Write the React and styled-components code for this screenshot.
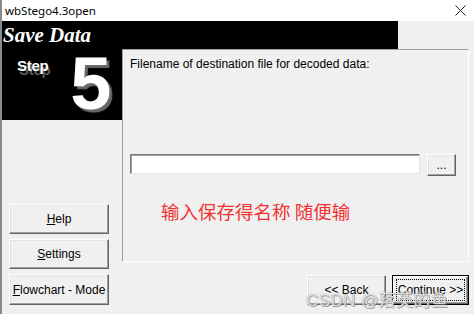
import React from "react";
import styled, { createGlobalStyle } from "styled-components";

const Global = createGlobalStyle`
  html, body { margin: 0; padding: 0; background: #f0f0f0; }
  #root { width: 474px; height: 314px; overflow: hidden; }
`;

const Window = styled.div`
  position: relative;
  width: 474px;
  height: 314px;
  background: #f0f0f0;
  display: flex;
  flex-direction: column;
  box-sizing: border-box;
  border-left: 2px solid #8a8a8a;
  font-family: "Liberation Sans", Arial, sans-serif;
  overflow: hidden;
`;

const TitleBar = styled.div`
  height: 21px;
  flex: none;
  background: #ffffff;
  display: flex;
  align-items: center;
  justify-content: space-between;
  padding: 0 6px 0 3px;
  font-family: "Noto Sans", "Noto Sans CJK SC", sans-serif;
  font-size: 11.5px;
  color: #000;
`;

const CloseIcon = styled.svg`
  width: 11px;
  height: 11px;
  margin-right: 2px;
`;

const Header = styled.div`
  height: 28px;
  width: 396px;
  flex: none;
  background: #000;
  display: flex;
  align-items: center;
  padding-left: 1px;
  box-sizing: border-box;
  color: #fff;
  font-family: "Liberation Serif", "Times New Roman", serif;
  font-style: italic;
  font-weight: bold;
  font-size: 21px;
`;

const Main = styled.div`
  flex: 1;
  display: flex;
`;

const LeftCol = styled.div`
  width: 120px;
  flex: none;
  display: flex;
  flex-direction: column;
  padding-bottom: 9px;
  box-sizing: border-box;
`;

const StepPanel = styled.div`
  height: 71px;
  background: #000;
  display: flex;
  color: #fff;
  font-family: "Liberation Sans", Arial, sans-serif;
  font-weight: bold;
`;

const StepWord = styled.div`
  font-size: 15px;
  line-height: 17px;
  margin: 8px 0 0 15px;
  text-shadow: 2px 4px 0 #5a5a5a;
  letter-spacing: -0.3px;
`;

const StepNum = styled.div`
  font-size: 74px;
  line-height: 64px;
  height: 64px;
  margin: 3px 0 0 22px;
  text-shadow: 3px 3px 1px #6a6a6a;
`;

const SideButtons = styled.div`
  margin-top: auto;
  padding-left: 7px;
  display: flex;
  flex-direction: column;
  gap: 5px;
`;

const Btn = styled.button`
  box-sizing: border-box;
  width: ${(p) => p.$w || 100}px;
  height: ${(p) => p.$h || 30}px;
  padding: 0;
  background: #f0f0f0;
  border-style: solid;
  border-width: 1px;
  border-color: #ffffff #646464 #646464 #ffffff;
  box-shadow: inset -1px -1px 0 #a0a0a0, inset 1px 1px 0 #e3e3e3;
  font-family: "Liberation Sans", Arial, sans-serif;
  font-size: 12px;
  color: #000;
  display: flex;
  align-items: center;
  justify-content: center;
  cursor: default;
  u { text-decoration: underline; text-underline-offset: 1px; }
`;

const DefaultBtn = styled(Btn)`
  border: 1px solid #000;
  box-shadow: inset 1px 1px 0 #fff, inset -1px -1px 0 #646464, inset -2px -2px 0 #a0a0a0;
  padding: 3px;
`;

const Focus = styled.span`
  flex: 1;
  align-self: stretch;
  display: flex;
  align-items: center;
  justify-content: center;
  border: 1px dotted #000;
`;

const RightCol = styled.div`
  flex: 1;
  display: flex;
  flex-direction: column;
  padding-right: 5px;
  padding-bottom: 9px;
  box-sizing: border-box;
`;

const ContentPanel = styled.div`
  height: 213px;
  box-sizing: border-box;
  border-style: solid;
  border-width: 1px;
  border-color: #a0a0a0 #ffffff #ffffff #a0a0a0;
  padding: 7px 0 0 7px;
  display: flex;
  flex-direction: column;
`;

const Label = styled.div`
  font-size: 12px;
  color: #000;
  line-height: 14px;
`;

const FileRow = styled.div`
  margin-top: 83px;
  display: flex;
  align-items: flex-start;
  gap: 7px;
`;

const FileInput = styled.div`
  width: 290px;
  height: 20px;
  box-sizing: border-box;
  background: #fff;
  border-style: solid;
  border-width: 1px;
  border-color: #7a7a7a #e3e3e3 #e3e3e3 #7a7a7a;
  box-shadow: inset 1px 1px 0 #a0a0a0;
`;

const Note = styled.div`
  margin: 24px 0 0 31px;
  font-family: "Noto Sans CJK SC", "Noto Sans", sans-serif;
  font-size: 18.5px;
  line-height: 22px;
  color: #f03232;
`;

const BottomButtons = styled.div`
  margin-top: auto;
  display: flex;
  justify-content: flex-end;
  gap: 6px;
`;

const Watermark = styled.div`
  position: absolute;
  left: 304px;
  top: 286px;
  font-family: "Liberation Sans", "Noto Sans CJK SC", sans-serif;
  font-size: 17px;
  color: rgba(255, 255, 255, 0.7);
  text-shadow: 0 0 1px #888, 1px 1px 0 rgba(120,120,120,0.6);
  pointer-events: none;
  letter-spacing: 0.4px;
`;

export default function App() {
  return (
    <>
      <Global />
      <Window>
        <TitleBar>
          <span>wbStego4.3open</span>
          <CloseIcon viewBox="0 0 11 11">
            <path d="M0.5 0.5L10.5 10.5M10.5 0.5L0.5 10.5" stroke="#222" strokeWidth="1" fill="none" />
          </CloseIcon>
        </TitleBar>
        <Header>Save Data</Header>
        <Main>
          <LeftCol>
            <StepPanel>
              <StepWord>Step</StepWord>
              <StepNum>5</StepNum>
            </StepPanel>
            <SideButtons>
              <Btn><span><u>H</u>elp</span></Btn>
              <Btn><span><u>S</u>ettings</span></Btn>
              <Btn $h={31}><span><u>F</u>lowchart - Mode</span></Btn>
            </SideButtons>
          </LeftCol>
          <RightCol>
            <ContentPanel>
              <Label>Filename of destination file for decoded data:</Label>
              <FileRow>
                <FileInput />
                <Btn $w={29} $h={22}>...</Btn>
              </FileRow>
              <Note>输入保存得名称 随便输</Note>
            </ContentPanel>
            <BottomButtons>
              <Btn $w={79}>&lt;&lt; Back</Btn>
              <DefaultBtn $w={77}><Focus>Continue &gt;&gt;</Focus></DefaultBtn>
            </BottomButtons>
          </RightCol>
        </Main>
        <Watermark>CSDN @落英的鱼</Watermark>
      </Window>
    </>
  );
}
